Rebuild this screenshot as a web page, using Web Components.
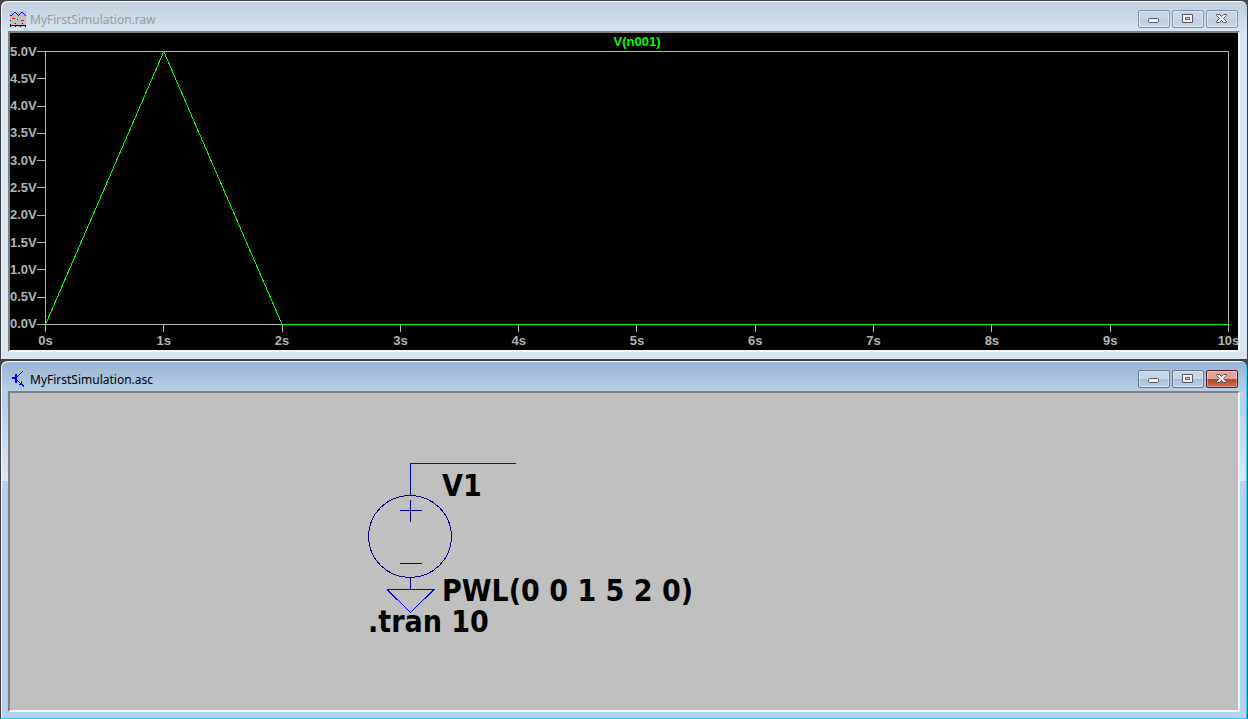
<!DOCTYPE html>
<html lang="en">
<head>
<meta charset="utf-8">
<title>MyFirstSimulation</title>
<style>
	body {
		display: flex;
		flex-direction: column;
		min-height: 100vh;
		margin: 0;
		background: #48484c;
		overflow: hidden;
	}

	sim-window.schematic {
		flex: 1;
	}
</style>
</head>
<body>
	<sim-window caption="MyFirstSimulation.raw">
		<sim-icon slot="icon" name="wave"></sim-icon>
		<wave-plot trace="V(n001)" points="0,0 1,5 2,0 10,0" xmax="10" ymax="5"></wave-plot>
	</sim-window>

	<sim-window class="schematic" caption="MyFirstSimulation.asc" active>
		<sim-icon slot="icon" name="transistor"></sim-icon>
		<schematic-sheet>
			<voltage-source slot="part"></voltage-source>
			<sheet-label x="432" y="75">V1</sheet-label>
			<sheet-label x="432" y="180">PWL(0 0 1 5 2 0)</sheet-label>
			<sheet-label x="358" y="211">.tran 10</sheet-label>
		</schematic-sheet>
	</sim-window>

<script>
class SimIcon extends HTMLElement {
	constructor() {
		super();

		this.icons = {
			wave: `
				<rect width="16" height="16" fill="#c0c0c0"/>
				<path d="M0 4h1v1h-1zM1 4h1v1h-1zM2 3h1v1h-1zM3 2h1v1h-1zM4 1h2v1h-2zM6 2h1v1h-1zM7 3h1v1h-1zM8 4h1v1h-1zM9 3h1v1h-1zM10 2h1v1h-1zM11 1h2v1h-2zM13 2h1v1h-1zM14 3h1v1h-1zM15 4h1v1h-1z" fill="#0000ff"/>
				<path d="M2 7h3v1h-3zM7 8h1v1h-1zM11 9h3v1h-3z" fill="#ff0000"/>
				<path d="M0 9h1v1h-1zM5 12h1v1h-1zM12 12h1v1h-1z" fill="#000080"/>
				<path d="M0 14h16v1h-16zM0 13h1v3h-1zM5 15h1v1h-1zM10 15h1v1h-1zM15 15h1v1h-1z" fill="#000"/>`,
			transistor: `
				<path d="M2 6h3v2h-3zM5 3h2v9h-2z" fill="#0000ff"/>
				<path d="M7 5h1v-1h1v-1h1v-1h1v-1h1v-1h1v1h-1v1h-1v1h-1v1h-1v1h-1v1h-1z" fill="#0000ff"/>
				<path d="M7 9h1v1h1v1h1v1h1v-2h1v3h1v1h1v2h-1v-1h-1v-1h-3v-1h1v-1h-1v-1h-1v-1h-1z" fill="#0000ff"/>`,
		};

		this.shadow = this.attachShadow({ mode: "open" });
	}

	connectedCallback() {
		this.shadow.innerHTML = `
			<style>
				:host {
					display: block;
					width: 16px;
					height: 16px;
				}

				svg {
					display: block;
				}
			</style>

			<svg width="16" height="16" viewBox="0 0 16 16" shape-rendering="crispEdges" aria-hidden="true">
				${this.icons[this.getAttribute("name")]}
			</svg>`;
	}
}

customElements.define("sim-icon", SimIcon);

class SimWindow extends HTMLElement {
	constructor() {
		super();

		this.shadow = this.attachShadow({ mode: "open" });
	}

	render() {
		this.shadow.innerHTML = `
			<style>
				:host {
					--caption-color: #999;
					--edge: #fff;
					--frame: linear-gradient(#c0cedd, #d7e4f2 32px);
					--button: linear-gradient(#c8d5e4 50%, #bdcbdd 50%, #c8d6e5);
					--button-border: #8292ad;
					--close: var(--button);
					--close-border: var(--button-border);
					display: flex;
					flex-direction: column;
					box-sizing: border-box;
					padding: 0 7px 7px;
					border: 1px solid #3e3e42;
					border-radius: 7px 7px 0 0;
					background: var(--frame);
					box-shadow: inset 1px 1px #f4f8fc;
				}

				:host([active]) {
					--caption-color: #000;
					--edge: #27d3ee;
					--frame: linear-gradient(#98b4d2, #b9d1ea 32px, #b9d1ea 50px, #dbe8f6 120px, #b9d1ea 120px);
					--button: linear-gradient(#c5d6e9 50%, #a5bcd5 50%, #bfd3e8);
					--button-border: #62748e;
					--close: linear-gradient(#dfa59b 50%, #b8402c 50%, #ce6b55);
					--close-border: #4f1720;
					padding-bottom: 6px;
					border-bottom-color: var(--edge);
					box-shadow: inset 1px 1px #f4f8fc, inset -1px 0 var(--edge);
				}

				header {
					display: flex;
					align-items: center;
					gap: 4px;
					padding: 8px 2px 2px;
					color: var(--caption-color);
					font: 12px/18px "Noto Sans", sans-serif;
				}

				h1 {
					flex: 1;
					margin: 0;
					padding-top: 2px;
					font: inherit;
				}

				.buttons {
					display: flex;
					gap: 2px;
				}

				button {
					display: grid;
					place-items: center;
					width: 32px;
					height: 18px;
					padding: 0;
					border: 1px solid var(--button-border);
					border-radius: 2px;
					background: var(--button);
					box-shadow: inset 0 0 0 1px #ffffff66;
				}

				.close {
					border-color: var(--close-border);
					background: var(--close);
				}

				button svg {
					fill: #f4f4f4;
					stroke: #535666;
				}

				main {
					flex: 1;
					display: grid;
					border: 2px solid;
					border-color: #808080 #f4f4f4 #f4f4f4 #808080;
				}
			</style>

			<header>
				<slot name="icon"></slot>
				<h1>${this.getAttribute("caption")}</h1>
				<div class="buttons">
					<button type="button" aria-label="Minimize">
						<svg width="12" height="12" viewBox="0 0 12 12">
							<rect x="0.5" y="5.5" width="10" height="4" rx="1"/>
						</svg>
					</button>
					<button type="button" aria-label="Restore">
						<svg width="12" height="12" viewBox="0 0 12 12">
							<path fill-rule="evenodd" d="M0.5 1.5h10v8h-10zM3.5 4.5v2h4v-2z"/>
						</svg>
					</button>
					<button class="close" type="button" aria-label="Close">
						<svg width="12" height="12" viewBox="0 0 12 12">
							<path d="M0.5 1.5h3l2 2 2-2h3v1l-3 3 3 3v1h-3l-2-2-2 2h-3v-1l3-3-3-3z"/>
						</svg>
					</button>
				</div>
			</header>
			<main><slot></slot></main>`;
	}

	connectedCallback() {
		this.render();
	}
}

customElements.define("sim-window", SimWindow);

class WavePlot extends HTMLElement {
	constructor() {
		super();

		this.width = 1184;
		this.height = 274;
		this.shadow = this.attachShadow({ mode: "open" });
	}

	// data values to pixel centres of the viewBox
	tracePoints() {
		const xmax = Number(this.getAttribute("xmax"));
		const ymax = Number(this.getAttribute("ymax"));

		return this.getAttribute("points")
			.split(" ")
			.map((point) => {
				const [x, y] = point.split(",").map(Number);
				const px = 0.5 + (x / xmax) * (this.width - 1);
				const py = 0.5 + (1 - y / ymax) * (this.height - 1);
				return `${px},${py}`;
			})
			.join(" ");
	}

	render() {
		const volts = [];
		const seconds = [];

		for (let v = Number(this.getAttribute("ymax")); v >= 0; v -= 0.5) {
			volts.push(`<span>${v.toFixed(1)}V</span>`);
		}

		for (let s = 0; s <= Number(this.getAttribute("xmax")); s++) {
			seconds.push(`<span>${s}s</span>`);
		}

		this.shadow.innerHTML = `
			<style>
				:host {
					display: grid;
					grid-template-columns: 35px 1fr 9px;
					grid-template-rows: 18px 274px 25px;
					background: #000;
					color: #b4b4b4;
					font: bold 13px/18px "Liberation Sans", Arial, sans-serif;
				}

				.trace {
					grid-column: 2;
					color: #00ff00;
					text-align: center;
				}

				.volts {
					grid-column: 1;
					display: flex;
					flex-direction: column;
					justify-content: space-between;
				}

				.volts span {
					display: flex;
					align-items: center;
					justify-content: space-between;
					height: 1px;
				}

				.volts span::after {
					content: "";
					width: 8px;
					height: 1px;
					background: #b4b4b4;
				}

				.seconds {
					grid-column: 2;
					display: flex;
					justify-content: space-between;
				}

				.seconds span {
					display: flex;
					flex-direction: column;
					align-items: center;
					width: 1px;
				}

				.seconds span::before {
					content: "";
					width: 1px;
					height: 7px;
					background: #b4b4b4;
				}

				svg {
					display: block;
					width: 100%;
					height: 100%;
					fill: none;
				}

				rect,
				polyline {
					vector-effect: non-scaling-stroke;
				}
			</style>

			<div class="trace">${this.getAttribute("trace")}</div>
			<div class="volts">${volts.join("")}</div>
			<svg viewBox="0 0 ${this.width} ${this.height}" preserveAspectRatio="none" shape-rendering="crispEdges">
				<rect x="0.5" y="0.5" width="${this.width - 1}" height="${this.height - 1}" stroke="#b4b4b4"/>
				<polyline points="${this.tracePoints()}" stroke="#00ff00"/>
			</svg>
			<div class="seconds">${seconds.join("")}</div>`;
	}

	connectedCallback() {
		this.render();
	}
}

customElements.define("wave-plot", WavePlot);

class SchematicSheet extends HTMLElement {
	constructor() {
		super();

		this.shadow = this.attachShadow({ mode: "open" });
		this.shadow.innerHTML = `
			<style>
				:host {
					display: block;
					position: relative;
					min-height: 260px;
					background: #c0c0c0;
				}
			</style>

			<slot name="part"></slot>
			<slot></slot>`;
	}
}

customElements.define("schematic-sheet", SchematicSheet);

class VoltageSource extends HTMLElement {
	constructor() {
		super();

		this.shadow = this.attachShadow({ mode: "open" });
		this.shadow.innerHTML = `
			<style>
				:host {
					display: block;
					position: absolute;
					left: 358px;
					top: 70px;
				}

				svg {
					display: block;
					fill: none;
				}
			</style>

			<svg width="149" height="152" viewBox="0 0 149 152" shape-rendering="crispEdges">
				<path d="M148 0.5H42.5V22" stroke="#0000ff"/>
				<path d="M42.5 22V32M32 47.5H54M42.5 37V59M32 100.5H54M42.5 114V126" stroke="#000080"/>
				<ellipse cx="42" cy="73.5" rx="41.5" ry="41" stroke="#000080"/>
				<path d="M19 126.5H66L42.5 149.5L19 126.5" stroke="#0000ff"/>
			</svg>`;
	}
}

customElements.define("voltage-source", VoltageSource);

class SheetLabel extends HTMLElement {
	constructor() {
		super();

		this.shadow = this.attachShadow({ mode: "open" });
	}

	connectedCallback() {
		this.shadow.innerHTML = `
			<style>
				:host {
					position: absolute;
					left: ${this.getAttribute("x")}px;
					top: ${this.getAttribute("y")}px;
					color: #000;
					font: bold 30px/36px "DejaVu Sans Condensed", "DejaVu Sans", sans-serif;
					white-space: nowrap;
				}
			</style>

			<slot></slot>`;
	}
}

customElements.define("sheet-label", SheetLabel);
</script>
</body>
</html>
